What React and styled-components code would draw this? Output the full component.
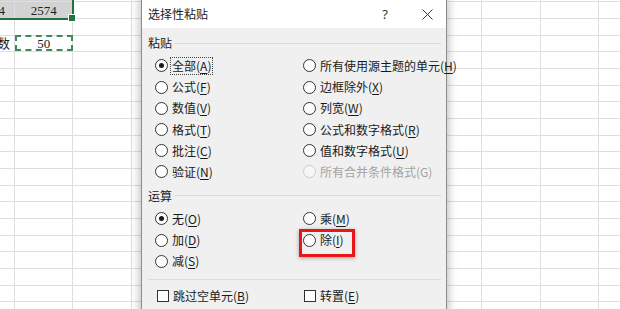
import React from 'react';
import styled, { createGlobalStyle } from 'styled-components';

const GlobalStyle = createGlobalStyle`
  html, body { margin: 0; padding: 0; background: #fff; overflow: hidden; }
  * { box-sizing: border-box; }
`;

const Screen = styled.div`
  position: relative;
  width: 620px;
  height: 309px;
  overflow: hidden;
  background: #fff;
`;

const Sheet = styled.div`
  position: relative;
  display: grid;
  grid-template-columns: repeat(12, 58.4px);
  grid-auto-rows: 16.67px;
  margin: -14.3px 0 0 -43.4px;
  font-family: "Liberation Serif", "Noto Sans CJK SC", serif;
  font-size: 13px;
  color: #222;
`;

const Cell = styled.div`
  position: relative;
  display: flex;
  align-items: center;
  justify-content: ${p => (p.$align === 'right' ? 'flex-end' : 'center')};
  padding-right: ${p => p.$pad || 0}px;
  border-right: 1px solid #dedede;
  border-bottom: 1px solid #dedede;
  background: ${p => (p.$selected ? '#d3d3d3' : '#fff')};
  white-space: nowrap;
  overflow: hidden;
  line-height: 1;

  ${p => p.$copied && `
    overflow: visible;
    &::after {
      content: '';
      position: absolute;
      top: -1px; left: 0; right: -1px; bottom: 0;
      border: 2px dashed #3f8a5a;
    }
  `}
`;

const SelectionFrame = styled.div`
  position: absolute;
  left: 0;
  top: 0;
  width: 117.8px;
  height: 34.3px;
  border: 2px solid #217346;
  pointer-events: none;

  &::after {
    content: '';
    position: absolute;
    right: -4px;
    bottom: -4px;
    width: 6px;
    height: 6px;
    background: #217346;
    border: 1px solid #fff;
  }
`;

const Dialog = styled.div`
  position: absolute;
  left: 141px;
  top: -1px;
  width: 306px;
  height: 330px;
  border: 1px solid #8c8c8c;
  background: #f0f0f0;
  box-shadow: 0 0 9px 1px rgba(0, 0, 0, 0.28);
  font-family: "Noto Sans CJK SC", "Noto Sans", sans-serif;
  font-size: 12px;
  color: #1a1a1a;
  display: flex;
  flex-direction: column;
`;

const TitleBar = styled.div`
  height: 28px;
  flex: none;
  background: #fff;
  display: flex;
  align-items: center;
  padding-left: 6px;
  line-height: 14px;
`;

const Title = styled.div`
  flex: 1;
`;

const TitleButton = styled.div`
  width: 30px;
  height: 20px;
  display: flex;
  align-items: center;
  justify-content: center;
  margin-right: ${p => p.$gap || 0}px;
  font-family: "Noto Sans", sans-serif;
  font-size: 13px;
  color: #333;
`;

const Body = styled.div`
  padding: 8px 5px 0 6px;
`;

const GroupHeader = styled.div`
  display: flex;
  align-items: center;
  gap: 2px;
  height: 14px;
  line-height: 14px;
  margin-top: ${p => p.$top || 0}px;

  &::after {
    content: '';
    flex: 1;
    height: 1px;
    background: #dcdcdc;
  }
`;

const Options = styled.div`
  display: grid;
  grid-template-columns: 148px 1fr;
  grid-auto-rows: 21.2px;
  margin-top: 5.4px;
  padding-left: 7px;
`;

const Option = styled.div`
  position: relative;
  display: flex;
  align-items: center;
  gap: 4px;
  line-height: 14px;
  color: ${p => (p.$disabled ? '#a3a3a3' : '#1a1a1a')};

  ${p => p.$highlight && `
    &::before {
      content: '';
      position: absolute;
      left: -4px;
      top: 0;
      width: 50px;
      height: 22px;
      border: 3px solid #e8161b;
      box-shadow: 0 1px 4px rgba(0, 0, 0, 0.35);
    }
  `}
`;

const Radio = styled.span`
  flex: none;
  width: 13px;
  height: 13px;
  border-radius: 50%;
  border: 1px solid ${p => (p.$disabled ? '#cdcdcd' : '#333')};
  background: ${p => (p.$disabled ? '#f6f6f6' : '#fff')};
  display: flex;
  align-items: center;
  justify-content: center;

  &::after {
    content: '';
    width: 5px;
    height: 5px;
    border-radius: 50%;
    background: #1a1a1a;
    display: ${p => (p.$checked ? 'block' : 'none')};
  }
`;

const Label = styled.span`
  white-space: nowrap;
  ${p => p.$focus && `
    outline: 1px dotted #444;
    outline-offset: 1px;
  `}

  u {
    text-decoration-thickness: 1px;
    text-underline-offset: 2px;
  }
`;

const Separator = styled.div`
  height: 1px;
  background: #dcdcdc;
  margin-top: 6.7px;
`;

const Checks = styled.div`
  display: grid;
  grid-template-columns: 147px 1fr;
  grid-auto-rows: 21px;
  margin-top: 6.2px;
  padding-left: 9px;
`;

const Check = styled.span`
  flex: none;
  width: 12px;
  height: 12px;
  border: 1px solid #333;
  background: #fff;
`;

const pasteOptions = [
  { label: '全部', key: 'A', checked: true, focus: true },
  { label: '所有使用源主题的单元', key: 'H' },
  { label: '公式', key: 'F' },
  { label: '边框除外', key: 'X' },
  { label: '数值', key: 'V' },
  { label: '列宽', key: 'W' },
  { label: '格式', key: 'T' },
  { label: '公式和数字格式', key: 'R' },
  { label: '批注', key: 'C' },
  { label: '值和数字格式', key: 'U' },
  { label: '验证', key: 'N' },
  { label: '所有合并条件格式', key: 'G', disabled: true },
];

const opOptions = [
  { label: '无', key: 'O', checked: true },
  { label: '乘', key: 'M' },
  { label: '加', key: 'D' },
  { label: '除', key: 'I', highlight: true },
  { label: '减', key: 'S' },
];

const RadioOption = ({ o }) => (
  <Option $disabled={o.disabled} $highlight={o.highlight}>
    <Radio $checked={o.checked} $disabled={o.disabled} />
    <Label $focus={o.focus}>
      {o.label}({o.disabled ? o.key : <u>{o.key}</u>})
    </Label>
  </Option>
);

const sheetCells = () => {
  const cells = [];
  for (let r = 0; r < 20; r++) {
    for (let c = 0; c < 12; c++) {
      const props = {};
      let text = null;
      if (r <= 1 && c <= 1) props.$selected = true;
      if (r === 1 && c === 0) { text = '1234'; props.$align = 'right'; props.$pad = 9; }
      if (r === 1 && c === 1) text = '2574';
      if (r === 3 && c === 0) { text = '除数'; props.$align = 'right'; props.$pad = 4; }
      if (r === 3 && c === 1) { text = '50'; props.$copied = true; }
      cells.push(<Cell key={`${r}-${c}`} {...props}>{text}</Cell>);
    }
  }
  return cells;
};

const CloseIcon = () => (
  <svg width="11" height="11" viewBox="0 0 11 11">
    <path d="M0.5 0.5 L10.5 10.5 M10.5 0.5 L0.5 10.5" stroke="#333" strokeWidth="1" fill="none" />
  </svg>
);

const App = () => (
  <Screen>
    <GlobalStyle />
    <Sheet>
      {sheetCells()}
      <SelectionFrame />
    </Sheet>
    <Dialog>
      <TitleBar>
        <Title>选择性粘贴</Title>
        <TitleButton $gap={12}>?</TitleButton>
        <TitleButton $gap={4}><CloseIcon /></TitleButton>
      </TitleBar>
      <Body>
        <GroupHeader>粘贴</GroupHeader>
        <Options>
          {pasteOptions.map(o => <RadioOption key={o.key} o={o} />)}
        </Options>
        <GroupHeader $top={6.4}>运算</GroupHeader>
        <Options>
          {opOptions.map(o => <RadioOption key={o.key} o={o} />)}
        </Options>
        <Separator />
        <Checks>
          <Option><Check /><Label>跳过空单元(<u>B</u>)</Label></Option>
          <Option><Check /><Label>转置(<u>E</u>)</Label></Option>
        </Checks>
      </Body>
    </Dialog>
  </Screen>
);

export default App;
